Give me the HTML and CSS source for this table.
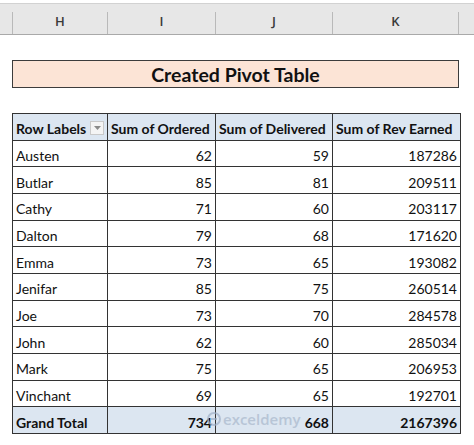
FILE: index.html
```html
<!DOCTYPE html>
<html>
<head>
<meta charset="utf-8">
<link rel="stylesheet" href="styles.css">
</head>
<body>
<div class="colbar">
  <div class="colhead c1">H</div>
  <div class="colhead c2">I</div>
  <div class="colhead c3">J</div>
  <div class="colhead c4">K</div>
</div>
<div class="sheet">
  <div class="title">Created Pivot Table</div>
  <div class="tablewrap">
    <table class="pivot">
      <colgroup>
        <col class="w1"><col class="w2"><col class="w3"><col class="w4">
      </colgroup>
      <thead>
        <tr>
          <th class="lbl"><span class="lbltext">Row Labels</span><span class="dd"><svg width="7" height="4" viewBox="0 0 7 4"><path d="M0 0 L7 0 L3.5 4 Z" fill="#8a8a8a"/></svg></span></th>
          <th>Sum of Ordered</th>
          <th>Sum of Delivered</th>
          <th>Sum of Rev Earned</th>
        </tr>
      </thead>
      <tbody>
        <tr><td>Austen</td><td class="n">62</td><td class="n">59</td><td class="n">187286</td></tr>
        <tr><td>Butlar</td><td class="n">85</td><td class="n">81</td><td class="n">209511</td></tr>
        <tr><td>Cathy</td><td class="n">71</td><td class="n">60</td><td class="n">203117</td></tr>
        <tr><td>Dalton</td><td class="n">79</td><td class="n">68</td><td class="n">171620</td></tr>
        <tr><td>Emma</td><td class="n">73</td><td class="n">65</td><td class="n">193082</td></tr>
        <tr><td>Jenifar</td><td class="n">85</td><td class="n">75</td><td class="n">260514</td></tr>
        <tr><td>Joe</td><td class="n">73</td><td class="n">70</td><td class="n">284578</td></tr>
        <tr><td>John</td><td class="n">62</td><td class="n">60</td><td class="n">285034</td></tr>
        <tr><td>Mark</td><td class="n">75</td><td class="n">65</td><td class="n">206953</td></tr>
        <tr><td>Vinchant</td><td class="n">69</td><td class="n">65</td><td class="n">192701</td></tr>
        <tr class="total"><td>Grand Total</td><td class="n">734</td><td class="n">668</td><td class="n">2167396</td></tr>
      </tbody>
    </table>
    <div class="watermark">
      <svg class="wm-icon" width="14" height="14" viewBox="0 0 14 14"><circle cx="7" cy="7" r="6" fill="none" stroke="#9fb0c8" stroke-width="2"/><path d="M4 7 h6" stroke="#9fb0c8" stroke-width="2"/></svg>
      <span class="wm-text">exceldemy</span>
      <span class="wm-sub">EXCEL · DATA · BI</span>
    </div>
  </div>
</div>
</body>
</html>
```
FILE: styles.css
```css
html, body {
  margin: 0;
  padding: 0;
  background: #ffffff;
}
body {
  font-family: Lato, "Open Sans", "Liberation Sans", sans-serif;
  color: #111;
}
.colbar {
  margin-top: 3px;
  height: 30px;
  background: #e7e7e7;
  border-top: 1px solid #d2d2d2;
  border-bottom: 1px solid #a9a9a9;
  display: flex;
  padding-left: 12px;
}
.colhead {
  height: 22px;
  margin-top: 8px;
  border-left: 1px solid #b9b9b9;
  font-family: "Open Sans", "Liberation Sans", sans-serif;
  font-size: 13px;
  font-weight: 600;
  color: #3a3a3a;
  display: flex;
  align-items: center;
  justify-content: center;
  padding-bottom: 4px;
  box-sizing: border-box;
}
.c1 { width: 95px; }
.c2 { width: 108px; }
.c3 { width: 117px; }
.c4 { width: 127px; border-right: 1px solid #b9b9b9; }

.sheet {
  padding: 25px 0 0 12px;
}
.title {
  width: 447px;
  height: 28px;
  box-sizing: border-box;
  border: 1.5px solid #3c3c3c;
  background: #fce4d6;
  font-weight: 700;
  font-size: 19.5px;
  display: flex;
  align-items: center;
  justify-content: center;
  color: #111;
}
.tablewrap {
  position: relative;
  margin-top: 25px;
  width: 448px;
}
.pivot {
  border-collapse: collapse;
  table-layout: fixed;
  width: 448px;
  font-size: 14px;
}
.w1 { width: 95px; }
.w2 { width: 108px; }
.w3 { width: 117px; }
.w4 { width: 128px; }
.pivot th, .pivot td {
  border: 1.5px solid #333;
  height: 26.67px;
  padding: 0 3px;
  box-sizing: border-box;
  white-space: nowrap;
  overflow: hidden;
}
.pivot th {
  background: #dce6f1;
  font-weight: 700;
  text-align: left;
  padding-top: 3px;
}
.pivot th.lbl {
  position: relative;
}
.dd {
  position: absolute;
  right: 3px;
  top: 7px;
  width: 14px;
  height: 14px;
  box-sizing: border-box;
  border: 1px solid #c9c9c9;
  background: #f4f4f4;
  display: flex;
  align-items: center;
  justify-content: center;
}
.pivot td {
  padding-top: 4px;
}
.pivot td.n {
  text-align: right;
}
.pivot tr.total td {
  background: #dce6f1;
  font-weight: 700;
}
.watermark {
  position: absolute;
  left: 195px;
  bottom: 1px;
  display: flex;
  align-items: center;
  gap: 2px;
  opacity: 0.7;
}
.wm-text {
  font-family: "Open Sans", "Liberation Sans", sans-serif;
  font-size: 15px;
  font-weight: 600;
  color: #a9b8cc;
  line-height: 18px;
  position: relative;
  top: -5px;
}
.wm-sub {
  position: absolute;
  left: 22px;
  top: 17px;
  font-size: 6px;
  letter-spacing: 1px;
  color: #b4c0d0;
  white-space: nowrap;
}
.wm-icon {
  position: relative;
  top: -5px;
}
```
